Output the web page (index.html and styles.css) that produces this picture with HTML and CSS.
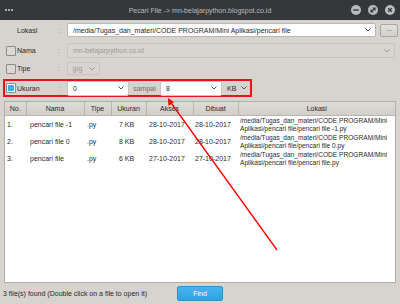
FILE: index.html
```html
<!DOCTYPE html>
<html lang="id">
<head>
    <meta charset="UTF-8">
    <title>Pecari File</title>
    <link rel="stylesheet" href="styles.css">
</head>
<body>
<div class="window">

    <!-- title bar -->
    <div class="titlebar">
        <div class="dots"><i></i><i></i><i></i></div>
        <div class="title">Pecari File -&gt; mn-belajarpython.blogspot.co.id</div>
        <div class="wbtns">
            <svg width="10" height="10" viewBox="0 0 10 10"><circle cx="5" cy="5" r="5" fill="#b9babb"/><rect x="2.3" y="4.3" width="5.4" height="1.4" fill="#35383a"/></svg>
            <svg width="10" height="10" viewBox="0 0 10 10"><circle cx="5" cy="5" r="5" fill="#b9babb"/><path d="M3 7 L7 3 M4.6 3 H7 V5.4 M3 4.6 V7 H5.4" stroke="#35383a" stroke-width="1.2" fill="none"/></svg>
            <svg width="10" height="10" viewBox="0 0 10 10"><circle cx="5" cy="5" r="5" fill="#b9babb"/><path d="M3.2 3.2 L6.8 6.8 M6.8 3.2 L3.2 6.8" stroke="#35383a" stroke-width="1.3"/></svg>
        </div>
    </div>

    <div class="form">
        <div class="row row-lokasi">
            <span class="check-slot"></span>
            <span class="label">Lokasi</span>
            <span class="colon">:</span>
            <div class="combo combo-lokasi">
                <span class="value">/media/Tugas_dan_materi/CODE PROGRAM/Mini Aplikasi/pencari file</span>
                <svg class="chev" width="6" height="4" viewBox="0 0 6 4"><path d="M0.5 0.5 L3 3 L5.5 0.5" stroke="#555" fill="none"/></svg>
            </div>
            <div class="browse">...</div>
        </div>

        <div class="row row-nama">
            <span class="check-slot"><span class="check"></span></span>
            <span class="label">Nama</span>
            <span class="colon">:</span>
            <div class="combo combo-off combo-nama">
                <span class="value">mn-belajarpython.co.id</span>
                <svg class="chev" width="6" height="4" viewBox="0 0 6 4"><path d="M0.5 0.5 L3 3 L5.5 0.5" stroke="#9a9794" fill="none"/></svg>
            </div>
        </div>

        <div class="row row-tipe">
            <span class="check-slot"><span class="check"></span></span>
            <span class="label">Tipe</span>
            <span class="colon">:</span>
            <div class="combo combo-off combo-tipe">
                <span class="value">jpg</span>
                <svg class="chev" width="6" height="4" viewBox="0 0 6 4"><path d="M0.5 0.5 L3 3 L5.5 0.5" stroke="#9a9794" fill="none"/></svg>
            </div>
        </div>

        <!-- ukuran, ditandai kotak merah -->
        <div class="row row-ukuran">
            <span class="check-slot"><span class="check checked"></span></span>
            <span class="label">Ukuran</span>
            <span class="colon">:</span>
            <div class="combo combo-size">
                <span class="value">0</span>
                <svg class="chev" width="6" height="4" viewBox="0 0 6 4"><path d="M0.5 0.5 L3 3 L5.5 0.5" stroke="#555" fill="none"/></svg>
            </div>
            <span class="sampai">sampai</span>
            <div class="combo combo-size">
                <span class="value">8</span>
                <svg class="chev" width="6" height="4" viewBox="0 0 6 4"><path d="M0.5 0.5 L3 3 L5.5 0.5" stroke="#555" fill="none"/></svg>
            </div>
            <div class="unit">
                <span class="value">KB</span>
                <svg class="chev" width="6" height="4" viewBox="0 0 6 4"><path d="M0.5 0.5 L3 3 L5.5 0.5" stroke="#555" fill="none"/></svg>
            </div>
        </div>
    </div>

    <!-- hasil pencarian -->
    <div class="table-box">
        <table class="result">
            <colgroup>
                <col class="c-no"><col class="c-nama"><col class="c-tipe"><col class="c-ukuran">
                <col class="c-akses"><col class="c-dibuat"><col class="c-lokasi">
            </colgroup>
            <thead>
                <tr><th>No.</th><th>Nama</th><th>Tipe</th><th>Ukuran</th><th>Akses</th><th>Dibuat</th><th>Lokasi</th></tr>
            </thead>
            <tbody>
                <tr><td>1.</td><td>pencari file -1</td><td>.py</td><td>7 KB</td><td>28-10-2017</td><td>28-10-2017</td><td class="path">/media/Tugas_dan_materi/CODE PROGRAM/Mini Aplikasi/pencari file/pencari file -1.py</td></tr>
                <tr><td>2.</td><td>pencari file 0</td><td>.py</td><td>8 KB</td><td>28-10-2017</td><td>28-10-2017</td><td class="path">/media/Tugas_dan_materi/CODE PROGRAM/Mini Aplikasi/pencari file/pencari file 0.py</td></tr>
                <tr><td>3.</td><td>pencari file</td><td>.py</td><td>6 KB</td><td>27-10-2017</td><td>27-10-2017</td><td class="path">/media/Tugas_dan_materi/CODE PROGRAM/Mini Aplikasi/pencari file/pencari file.py</td></tr>
            </tbody>
        </table>
    </div>

    <div class="footer">
        <span class="status">3 file(s) found (Double click on a file to open it)</span>
        <div class="find">Find</div>
    </div>

    <!-- panah merah -->
    <svg class="arrow" width="400" height="304" viewBox="0 0 400 304">
        <line x1="277" y1="250" x2="169" y2="100" stroke="#f00" stroke-width="1.3"/>
        <path d="M168 98 L168.5 106 L174 102 Z" fill="#f00"/>
    </svg>
</div>
</body>
</html>
```

FILE: styles.css
```css
body {
    margin: 0;
    font-family: "Liberation Sans", Arial, sans-serif;
    font-size: 7px;
    color: #2a2a2a;
}
.window {
    position: relative;
    width: 400px;
    height: 304px;
    background: #d7d3cf;
    overflow: hidden;
    display: flex;
    flex-direction: column;
}

/* title bar */
.titlebar {
    height: 20px;
    background: #35383a;
    display: grid;
    grid-template-columns: 1fr auto 1fr;
    align-items: center;
}
.dots {
    display: flex;
    gap: 1px;
    padding-left: 5px;
}
.dots i {
    width: 2px;
    height: 2px;
    background: #a9abad;
}
.title {
    color: #b9babb;
    font-size: 7px;
}
.wbtns {
    display: flex;
    justify-content: flex-end;
    gap: 7px;
    padding-right: 5px;
}

/* form */
.row {
    display: flex;
    align-items: center;
}
.check-slot {
    width: 11px;
    padding-left: 6px;
    display: flex;
    align-items: center;
}
.check {
    width: 8px;
    height: 8px;
    border: 1px solid #8e8b88;
    border-radius: 1px;
    background: #dcd8d4;
    box-sizing: content-box;
}
.check.checked {
    background: #3daee9;
    box-shadow: inset 0 0 0 1px #fff;
}
.label {
    width: 41px;
}
.colon {
    width: 9px;
    color: #8b8885;
}
.combo {
    display: flex;
    align-items: center;
    justify-content: space-between;
    background: #fff;
    border: 1px solid #bab6b2;
    border-radius: 2px;
    padding: 0 4px 0 5px;
    box-sizing: border-box;
    height: 100%;
}
.combo-off {
    background: #d8d4d0;
    border-color: #c8c4c0;
    color: #9d9a97;
}
.row-lokasi {
    margin-top: 3px;
    height: 14px;
}
.combo-lokasi {
    width: 309px;
}
.browse {
    margin-left: 4px;
    width: 16px;
    height: 11px;
    border: 1px solid #aaa6a2;
    border-radius: 2px;
    background: linear-gradient(#e3e0dd, #d2ceca);
    text-align: center;
    line-height: 8px;
    color: #444;
}
.row-nama {
    margin-top: 6px;
    height: 15px;
}
.combo-nama {
    width: 328px;
}
.row-tipe {
    margin-top: 4px;
    height: 13px;
}
.combo-tipe {
    width: 33px;
}
.row-ukuran {
    margin: 4px 0 0 3px;
    width: 249px;
    height: 18px;
    border: 2px solid #f40d12;
    box-sizing: border-box;
}
.row-ukuran .check-slot {
    padding-left: 1px;
    width: 11px;
}
.row-ukuran .combo {
    width: 62px;
    height: 15px;
    border-color: #c9c5c1;
}
.sampai {
    width: 31px;
    text-align: center;
    color: #6f6c69;
}
.unit {
    flex: 1;
    display: flex;
    align-items: center;
    gap: 5px;
    padding-left: 5px;
}

/* tabel */
.table-box {
    margin: 4px 4px 0 4px;
    height: 182px;
    background: #fff;
    border: 1px solid #b1ada9;
    box-sizing: border-box;
}
.result {
    width: 100%;
    border-collapse: collapse;
    table-layout: fixed;
}
.c-no { width: 21px; }
.c-nama { width: 58px; }
.c-tipe { width: 27px; }
.c-ukuran { width: 35px; }
.c-akses { width: 47px; }
.c-dibuat { width: 45px; }
.result th {
    height: 13px;
    font-weight: normal;
    background: linear-gradient(#dedad6, #d2cec9);
    border-right: 1px solid #b9b5b1;
    border-bottom: 1px solid #b9b5b1;
    padding: 0;
}
.result th:last-child {
    border-right: none;
}
.result td {
    height: 17px;
    padding: 0 0 0 2px;
    white-space: nowrap;
    overflow: hidden;
}
.result td:nth-child(2) { padding-left: 4px; }
.result td:nth-child(3) { padding-left: 3px; }
.result td:nth-child(4) { padding-left: 8px; }
.result td:nth-child(5) { padding-left: 3px; }
.result td.path {
    white-space: normal;
    font-size: 6.6px;
    line-height: 8px;
    padding-left: 2px;
}

/* footer */
.footer {
    flex: 1;
    display: flex;
    align-items: center;
    padding-left: 3px;
}
.status {
    width: 174px;
}
.find {
    width: 46px;
    height: 15px;
    background: linear-gradient(#45b4ee, #30a4e0);
    border: 1px solid #2a95cf;
    border-radius: 2px;
    box-sizing: border-box;
    color: #fff;
    text-align: center;
    line-height: 13px;
}

.arrow {
    position: absolute;
    top: 0;
    left: 0;
    pointer-events: none;
}
```
